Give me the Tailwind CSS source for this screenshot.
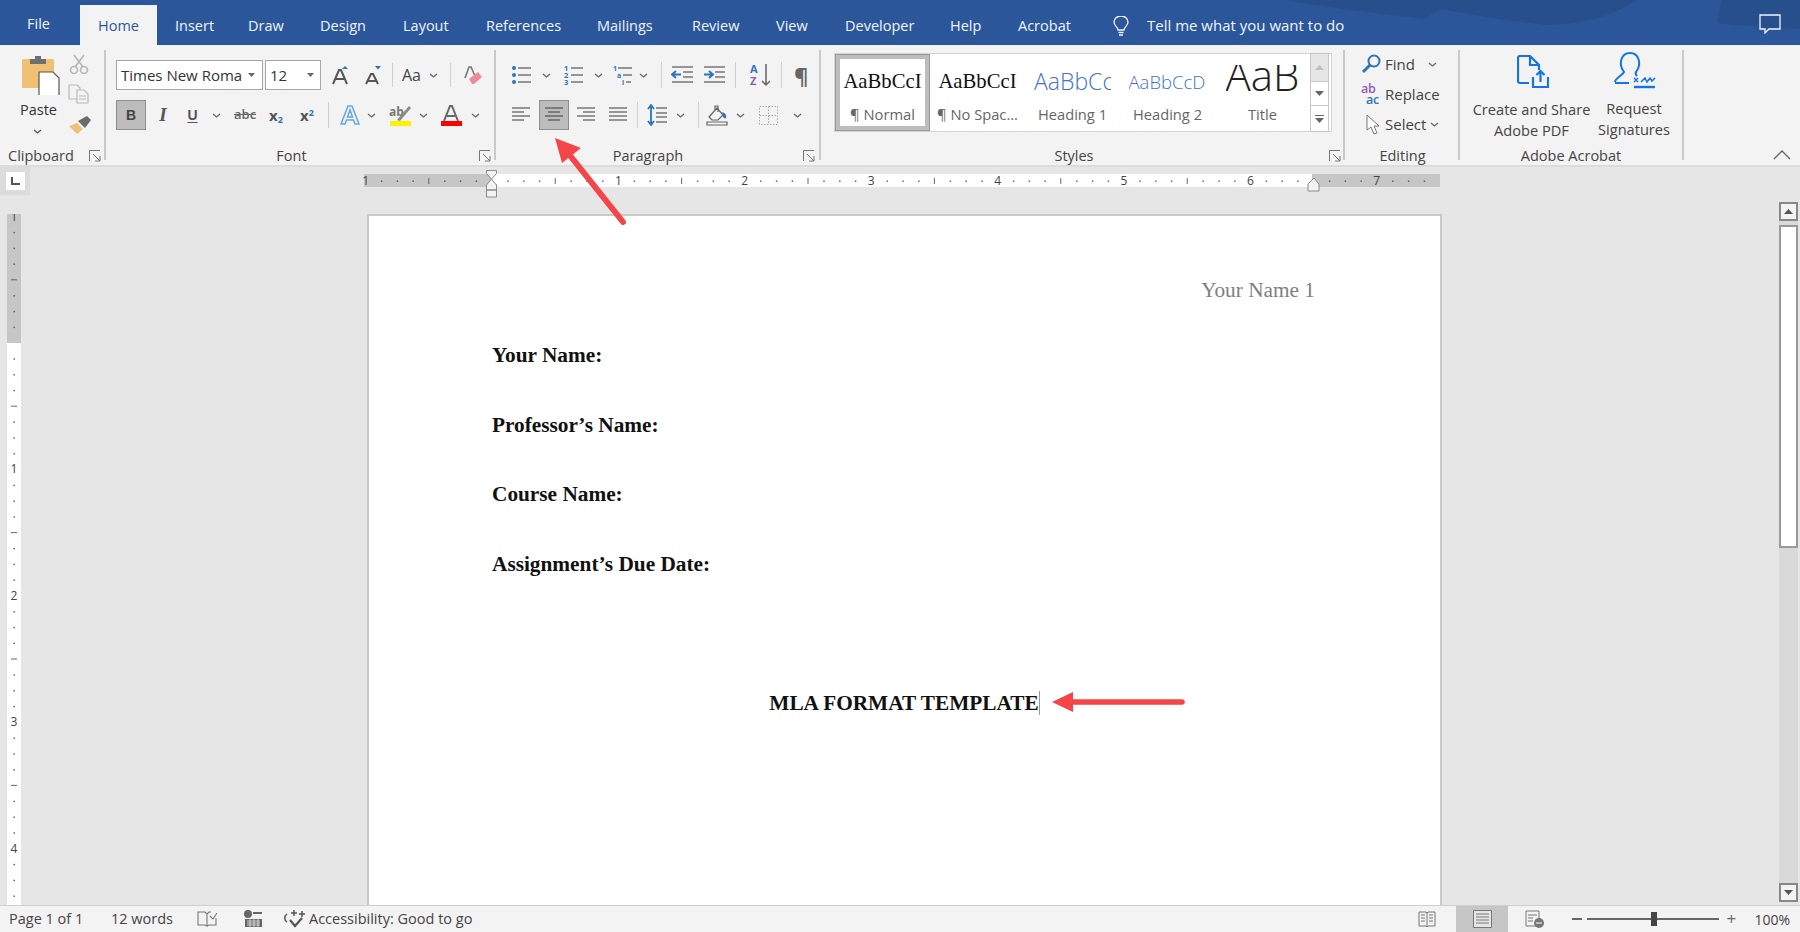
<!DOCTYPE html>
<html lang="en">
<head>
<meta charset="UTF-8">
<title>Word</title>
<script src="https://cdn.jsdelivr.net/npm/@tailwindcss/browser@4"></script>
</head>
<body class="w-[1800px] h-[932px] overflow-hidden flex flex-col bg-[#e6e6e6] font-['Open_Sans',sans-serif] text-[#444] relative">

<!-- TAB BAR -->
<header class="h-[45px] flex-none bg-[#2b579a] text-[#f0f4fa] text-[14.500px] flex items-end relative overflow-hidden">
  <svg class="absolute right-0 top-0" width="620" height="45" fill="#274f8c"><path d="M106 0Q146 8 246 19Q255 10 265 10Q320 20 365 25Q420 25 457 0ZM541 0L537 23Q570 27 620 29V0Z"/></svg>
  <nav class="flex items-end h-[40px] pl-[27px] relative">
    <span class="h-[40px] w-[53px] leading-[38px]">File</span>
    <span class="h-[40px] w-[77px] bg-[#f3f3f3] text-[#2b579a] text-center leading-[42px]">Home</span>
    <span class="h-[40px] w-[75px] pl-[18px] leading-[42px]">Insert</span>
    <span class="h-[40px] w-[88px] pl-[16px] leading-[42px]">Draw</span>
    <span class="h-[40px] w-[83px] leading-[42px]">Design</span>
    <span class="h-[40px] w-[83px] leading-[42px]">Layout</span>
    <span class="h-[40px] w-[111px] leading-[42px]">References</span>
    <span class="h-[40px] w-[95px] leading-[42px]">Mailings</span>
    <span class="h-[40px] w-[84px] leading-[42px]">Review</span>
    <span class="h-[40px] w-[69px] leading-[42px]">View</span>
    <span class="h-[40px] w-[105px] leading-[42px]">Developer</span>
    <span class="h-[40px] w-[68px] leading-[42px]">Help</span>
    <span class="h-[40px] w-[95px] leading-[42px]">Acrobat</span>
    <span class="h-[40px] flex items-start pt-[11px]">
      <svg width="16" height="21" viewBox="0 0 16 21" fill="none" stroke="#f0f4fa" stroke-width="1.3"><path d="M5 14c0-3-4-4-4-8a7 6 0 0 1 14 0c0 4-4 5-4 8zM5.5 16.500h5M6 19h4"/></svg>
      <span class="ml-[18px] leading-[18px] text-[15px]">Tell me what you want to do</span>
    </span>
  </nav>
  <svg class="absolute left-[1759px] top-[14px]" width="22" height="20" viewBox="0 0 22 20" fill="none" stroke="#f0f4fa" stroke-width="1.3"><path d="M1 1h20v14H10l-4 4v-4H1z"/></svg>
</header>

<!-- RIBBON -->
<section class="h-[122px] flex-none bg-[#f3f3f3] border-b-[2px] border-[#dcdcdc] flex pt-[5px] text-[14.500px]">

  <!-- Clipboard -->
  <div class="w-[106px] h-[110px] flex-none border-r-2 border-[#c9c9c9] flex flex-col">
    <div class="h-[99px] flex-none flex">
      <div class="w-[68px] pl-[20px] pt-[5px] flex flex-col items-start">
        <svg width="40" height="40" viewBox="0 0 40 40"><path d="M4 4h28a2 2 0 0 1 2 2v27H2V6a2 2 0 0 1 2-2z" fill="#f0c074" /><path d="M10 4h16v5H10z" fill="#6f6f6f"/><path d="M15 1h6v4h-6z" fill="#6f6f6f"/><path d="M19 17h14l6 6v19H19z" fill="#fff" stroke="#555" stroke-width="1.200"/></svg>
        <span class="mt-[6px] leading-[18px] text-[14.500px] text-[#333]">Paste</span>
        <svg class="ml-[13px] mt-[10px]" width="9" height="5" fill="none" stroke="#555" stroke-width="1.300"><path d="M1 1l3.500 3L8 1"/></svg>
      </div>
      <div class="flex flex-col pt-[4px] gap-[10px]">
        <svg width="22" height="20" viewBox="0 0 22 20" fill="none" stroke="#b6b6b6" stroke-width="1.600"><circle cx="6" cy="16" r="3.500"/><circle cx="16" cy="16" r="3.500"/><path d="M7 13L16 1M15 13L6 1"/></svg>
        <svg width="22" height="20" viewBox="0 0 22 20" fill="#f3f3f3" stroke="#b9b9b9" stroke-width="1.200"><path d="M1 1h8l3 3v11H1z"/><path d="M9 6h7l4 4v9H9z"/><path d="M11 12h7M11 15h7" stroke-width="1"/></svg>
        <svg width="24" height="20" viewBox="0 0 24 20"><path d="M1 12l8-3 6 6-6 5z" fill="#edc07b"/><path d="M10 7l7 7 6-8-4-4z" fill="#6b6b6b"/></svg>
      </div>
    </div>
    <div class="flex flex-none items-center h-[14px]">
      <span class="ml-[8px] w-[81px] leading-[14px]">Clipboard</span>
      <svg width="12" height="12" viewBox="0 0 12 12" fill="none" stroke="#777"><path d="M.5 11V.5H11M4 4l7 7M11 6v5H6"/></svg>
    </div>
  </div>

  <!-- Font -->
  <div class="w-[390px] h-[110px] flex-none border-r-2 border-[#c9c9c9] flex flex-col pl-[10px]">
    <div class="h-[99px] flex-none flex flex-col pt-[10px]">
      <div class="flex items-center h-[30px]">
        <div class="w-[147px] h-[30px] bg-white border border-[#a6a6a6] flex items-center justify-between pl-[4px] pr-[7px] text-[15px] text-[#333]">Times New Roma<svg width="7" height="4"><path d="M0 0h7L3.500 4z" fill="#666"/></svg></div>
        <div class="w-[56px] h-[30px] ml-[2px] bg-white border border-[#a6a6a6] flex items-center justify-between pl-[4px] pr-[6px] text-[15px] text-[#333]">12<svg width="7" height="4"><path d="M0 0h7L3.500 4z" fill="#666"/></svg></div>
        <svg class="ml-[11px]" width="18" height="20" viewBox="0 0 18 20"><path d="M1 19L7 5h2l6 14M3.500 14h9" fill="none" stroke="#555" stroke-width="2"/><path d="M10 4l3-3 3 3z" fill="#2e75b6"/></svg>
        <svg class="ml-[15px]" width="18" height="20" viewBox="0 0 18 20"><path d="M1 19L6 9h2l5 10M3 16h8" fill="none" stroke="#555" stroke-width="2"/><path d="M10 1h6l-3 3.500z" fill="#2e75b6"/></svg>
        <span class="w-px h-[24px] bg-[#cfcfcf] ml-[9px]"></span>
        <span class="ml-[9px] text-[16px] w-[24px]">Aa</span>
        <svg class="ml-[3px]" width="9" height="5" fill="none" stroke="#666" stroke-width="1.300"><path d="M1 1l3.500 3L8 1"/></svg>
        <span class="w-px h-[24px] bg-[#cfcfcf] ml-[12px]"></span>
        <svg class="ml-[12px]" width="20" height="20" viewBox="0 0 20 20"><path d="M2 13L6 2h2l4 9" fill="none" stroke="#777" stroke-width="1.600"/><path d="M6 14l9-7 4 5-8 7H9z" fill="#ea8a9b"/></svg>
      </div>
      <div class="flex items-center h-[30px] mt-[10px]">
        <span class="w-[30px] h-[30px] bg-[#bcbcbc] border border-[#8f8f8f] flex items-center justify-center font-['Liberation_Sans'] font-bold text-[14px] text-[#444]">B</span>
        <span class="w-[36px] text-center font-['Liberation_Serif'] italic font-bold text-[19px] text-[#555] pr-[2px]">I</span>
        <span class="w-[22px] text-center font-['Liberation_Sans'] font-bold text-[14px] text-[#555] underline underline-offset-2 -ml-[3px] pl-[5px]">U</span>
        <svg class="ml-[11px]" width="9" height="5" fill="none" stroke="#666" stroke-width="1.300"><path d="M1 1l3.500 3L8 1"/></svg>
        <span class="ml-[13px] w-[24px] text-[13px] font-semibold text-[#666] line-through">abc</span>
        <span class="ml-[11px] w-[20px] text-[15px] font-bold text-[#555]">x<sub class="text-[9px] text-[#2e75b6]">2</sub></span>
        <span class="ml-[11px] w-[20px] text-[15px] font-bold text-[#555]">x<sup class="text-[9px] text-[#2e75b6]">2</sup></span>
        <span class="w-px h-[26px] bg-[#cfcfcf] ml-[8px]"></span>
        <svg class="ml-[11px]" width="20" height="20" viewBox="0 0 20 20"><path d="M1 19L8 1h4l7 18h-4l-1.500-4h-7L5 19zM7.500 12h5L10 5z" fill="#eaf2fa" stroke="#6ea6da" stroke-width="1.500"/></svg>
        <svg class="ml-[7px]" width="9" height="5" fill="none" stroke="#666" stroke-width="1.300"><path d="M1 1l3.500 3L8 1"/></svg>
        <span class="ml-[13px] w-[22px] h-[22px] flex flex-col items-center justify-end">
          <svg width="22" height="16" viewBox="0 0 22 16"><text x="0" y="11" font-size="12" font-weight="700" font-family="Open Sans" fill="#777">ab</text><path d="M8 15L20 1l2 2L11 16z" fill="#8a8a8a"/></svg>
          <span class="w-[21px] h-[5px] bg-[#fff200] flex-none"></span>
        </span>
        <svg class="ml-[8px]" width="9" height="5" fill="none" stroke="#666" stroke-width="1.300"><path d="M1 1l3.500 3L8 1"/></svg>
        <span class="ml-[12px] w-[22px] h-[22px] flex flex-col items-center justify-end">
          <svg width="18" height="16" viewBox="0 0 18 16"><path d="M2 16L8 1h2l6 15M5 11h8" fill="none" stroke="#666" stroke-width="2"/></svg>
          <span class="w-[21px] h-[5px] bg-[#f00] flex-none"></span>
        </span>
        <svg class="ml-[9px]" width="9" height="5" fill="none" stroke="#666" stroke-width="1.300"><path d="M1 1l3.500 3L8 1"/></svg>
      </div>
    </div>
    <div class="flex flex-none items-center h-[14px]">
      <span class="flex-1 text-center leading-[14px] -ml-[12px]">Font</span>
      <svg class="mr-[3px]" width="12" height="12" viewBox="0 0 12 12" fill="none" stroke="#777"><path d="M.5 11V.5H11M4 4l7 7M11 6v5H6"/></svg>
    </div>
  </div>

  <!-- Paragraph -->
  <div class="w-[325px] h-[110px] flex-none border-r-2 border-[#c9c9c9] flex flex-col pl-[15px]">
    <div class="h-[99px] flex-none flex flex-col pt-[10px]">
      <div class="flex items-center h-[30px]">
        <svg width="20" height="20" viewBox="0 0 20 20"><path d="M7 3h13M7 10h13M7 17h13" stroke="#777" stroke-width="1.500"/><circle cx="3" cy="3" r="2" fill="#2e75b6"/><circle cx="3" cy="10" r="2" fill="#2e75b6"/><circle cx="3" cy="17" r="2" fill="#2e75b6"/></svg>
        <svg class="ml-[11px]" width="9" height="5" fill="none" stroke="#666" stroke-width="1.300"><path d="M1 1l3.500 3L8 1"/></svg>
        <svg class="ml-[12px]" width="20" height="20" viewBox="0 0 20 20" font-family="Open Sans" font-size="7.500" font-weight="700" fill="#2e75b6"><path d="M8 3h12M8 10h12M8 17h12" stroke="#777" stroke-width="1.500"/><text x="1" y="6">1</text><text x="1" y="13">2</text><text x="1" y="20">3</text></svg>
        <svg class="ml-[11px]" width="9" height="5" fill="none" stroke="#666" stroke-width="1.300"><path d="M1 1l3.500 3L8 1"/></svg>
        <svg class="ml-[9px]" width="22" height="20" viewBox="0 0 22 20" font-family="Open Sans" font-size="7" font-weight="700" fill="#2e75b6"><path d="M6 3h14M11 10h9M14 17h5" stroke="#777" stroke-width="1.500"/><text x="1" y="6">1</text><text x="5" y="13">a</text><text x="10" y="20">i</text></svg>
        <svg class="ml-[5px]" width="9" height="5" fill="none" stroke="#666" stroke-width="1.300"><path d="M1 1l3.500 3L8 1"/></svg>
        <span class="w-px h-[26px] bg-[#cfcfcf] ml-[13px]"></span>
        <svg class="ml-[9px]" width="22" height="20" viewBox="0 0 22 20"><path d="M1 2h21M12 7h10M12 12h10M1 17h21" stroke="#777" stroke-width="1.500"/><path d="M1 9.500h9M5 6L1 9.500 5 13" fill="none" stroke="#2e75b6" stroke-width="2"/></svg>
        <svg class="ml-[10px]" width="22" height="20" viewBox="0 0 22 20"><path d="M1 2h21M12 7h10M12 12h10M1 17h21" stroke="#777" stroke-width="1.500"/><path d="M1 9.500h9M6 6l4 3.500L6 13" fill="none" stroke="#2e75b6" stroke-width="2"/></svg>
        <span class="w-px h-[26px] bg-[#cfcfcf] ml-[10px]"></span>
        <svg class="ml-[14px]" width="20" height="24" viewBox="0 0 20 24"><path d="M16 1v21M12 18l4 4 4-4" fill="none" stroke="#666" stroke-width="1.500"/><text x="0" y="10" font-size="11" font-weight="700" fill="#2e75b6" font-family="Open Sans">A</text><text x="0" y="22" font-size="11" font-weight="700" fill="#8e5cb5" font-family="Open Sans">Z</text></svg>
        <span class="w-px h-[26px] bg-[#cfcfcf] ml-[11px]"></span>
        <span class="ml-[12px] text-[22px] font-bold text-[#666] leading-[20px]">¶</span>
      </div>
      <div class="flex items-center h-[30px] mt-[10px]">
        <svg width="20" height="18" viewBox="0 0 20 18" stroke="#777" stroke-width="1.400"><path d="M1 2h18M1 6h12M1 10h18M1 14h12"/></svg>
        <span class="ml-[8px] w-[30px] h-[30px] bg-[#bcbcbc] border border-[#8f8f8f] flex items-center justify-center"><svg width="20" height="18" viewBox="0 0 20 18" stroke="#666" stroke-width="1.400"><path d="M1 2h18M4 6h12M1 10h18M4 14h12"/></svg></span>
        <svg class="ml-[7px]" width="20" height="18" viewBox="0 0 20 18" stroke="#777" stroke-width="1.400"><path d="M1 2h18M7 6h12M1 10h18M7 14h12"/></svg>
        <svg class="ml-[12px]" width="20" height="18" viewBox="0 0 20 18" stroke="#777" stroke-width="1.400"><path d="M1 2h18M1 6h18M1 10h18M1 14h18"/></svg>
        <span class="w-px h-[26px] bg-[#cfcfcf] ml-[9px]"></span>
        <svg class="ml-[9px]" width="20" height="22" viewBox="0 0 20 22" fill="none"><path d="M9 4h11M9 9h11M9 13h11M9 18h11" stroke="#777" stroke-width="1.500"/><path d="M4 1v20M1 5l3-4 3 4M1 17l3 4 3-4" stroke="#2e75b6" stroke-width="1.800"/></svg>
        <svg class="ml-[9px]" width="9" height="5" fill="none" stroke="#666" stroke-width="1.300"><path d="M1 1l3.500 3L8 1"/></svg>
        <span class="w-px h-[26px] bg-[#cfcfcf] ml-[13px]"></span>
        <svg class="ml-[7px]" width="22" height="22" viewBox="0 0 22 22" fill="none"><path d="M1 21h20v-3H1zM3 13l8-9 6 7-5 5H6z" stroke="#666" stroke-width="1.200"/><path d="M9 6V2h3v6" stroke="#666" stroke-width="1.200"/><path d="M16 8c3 1 5 3 4 6-1 1-3 0-3-2z" fill="#2e75b6"/></svg>
        <svg class="ml-[8px]" width="9" height="5" fill="none" stroke="#666" stroke-width="1.300"><path d="M1 1l3.500 3L8 1"/></svg>
        <svg class="ml-[14px]" width="19" height="19" viewBox="0 0 19 19" fill="none" stroke="#aaa" stroke-dasharray="1.500 1.500"><path d="M.5.500h18v18H.5zM9.500.5v18M.5 9.500h18"/></svg>
        <svg class="ml-[15px]" width="9" height="5" fill="none" stroke="#666" stroke-width="1.300"><path d="M1 1l3.500 3L8 1"/></svg>
      </div>
    </div>
    <div class="flex flex-none items-center h-[14px]">
      <span class="flex-1 text-center leading-[14px] pr-[18px]">Paragraph</span>
      <svg class="mr-[4px]" width="12" height="12" viewBox="0 0 12 12" fill="none" stroke="#777"><path d="M.5 11V.5H11M4 4l7 7M11 6v5H6"/></svg>
    </div>
  </div>

  <!-- Styles -->
  <div class="w-[524px] h-[110px] flex-none border-r-2 border-[#c9c9c9] flex flex-col pl-[13px]">
    <div class="h-[99px] flex-none pt-[3px]">
      <div class="w-[498px] h-[79px] flex border border-[#d4d4d4] bg-white text-[14.700px]">
        <div class="w-[95px] h-[77px] flex-none border-[5px] border-[#bdbdbd] outline outline-[1px] -outline-offset-[1px] outline-[#999] flex flex-col items-center overflow-hidden">
          <span class="font-['Liberation_Serif'] text-[20.700px] leading-[25px] mt-[10px] text-[#111] whitespace-nowrap">AaBbCcI</span>
          <span class="mt-[11px] leading-[18px] text-[#666]">¶ Normal</span>
        </div>
        <div class="w-[95px] flex-none flex flex-col items-center overflow-hidden">
          <span class="font-['Liberation_Serif'] text-[20.700px] leading-[25px] mt-[15px] text-[#111] whitespace-nowrap">AaBbCcI</span>
          <span class="mt-[11px] leading-[18px] text-[#666] whitespace-nowrap">¶ No Spac...</span>
        </div>
        <div class="w-[95px] flex-none flex flex-col items-center">
          <span class="w-[77px] overflow-hidden text-[23px] font-light leading-[25px] mt-[15px] text-[#4472c4] whitespace-nowrap">AaBbCc</span>
          <span class="mt-[11px] leading-[18px] text-[#666]">Heading 1</span>
        </div>
        <div class="w-[95px] flex-none flex flex-col items-center">
          <span class="w-[78px] overflow-hidden text-[18.500px] font-light leading-[25px] mt-[15px] text-[#4472c4] whitespace-nowrap">AaBbCcD</span>
          <span class="mt-[11px] leading-[18px] text-[#666]">Heading 2</span>
        </div>
        <div class="w-[95px] flex-none flex flex-col items-center">
          <span class="h-[30px] overflow-hidden text-[42px] font-light leading-[19px] mt-[11px] text-[#222] whitespace-nowrap">AaB</span>
          <span class="mt-[10px] leading-[18px] text-[#666]">Title</span>
        </div>
        <div class="w-[19px] flex-none -my-px flex flex-col border border-[#c6c6c6] bg-white">
          <span class="h-[28px] flex-none bg-[#e6e6e6] border-b border-[#c6c6c6] flex items-center justify-center"><svg width="9" height="5"><path d="M0 5h9L4.500 0z" fill="#c0c0c0"/></svg></span>
          <span class="h-[24px] flex-none border-b border-[#c6c6c6] flex items-center justify-center"><svg width="9" height="5"><path d="M0 0h9L4.500 5z" fill="#666"/></svg></span>
          <span class="flex-1 flex items-center justify-center"><svg width="9" height="8"><path d="M0 0h9v1H0zM0 3h9L4.500 8z" fill="#666"/></svg></span>
        </div>
      </div>
    </div>
    <div class="flex flex-none items-center h-[14px]">
      <span class="flex-1 text-center leading-[14px] pr-[15px]">Styles</span>
      <svg class="mr-[2px]" width="12" height="12" viewBox="0 0 12 12" fill="none" stroke="#777"><path d="M.5 11V.5H11M4 4l7 7M11 6v5H6"/></svg>
    </div>
  </div>

  <!-- Editing -->
  <div class="w-[115px] h-[110px] flex-none border-r-2 border-[#c9c9c9] flex flex-col pl-[16px]">
    <div class="h-[99px] flex-none flex flex-col text-[15px] text-[#444]">
      <div class="flex items-center h-[30px] -mt-px">
        <svg width="20" height="20" viewBox="0 0 20 20" fill="none" stroke="#2e75b6"><circle cx="13" cy="7" r="5.500" stroke-width="2"/><path d="M9 11l-7 7" stroke-width="3"/></svg>
        <span class="ml-[4px] w-[43px]">Find</span>
        <svg width="9" height="5" fill="none" stroke="#666" stroke-width="1.300"><path d="M1 1l3.500 3L8 1"/></svg>
      </div>
      <div class="flex items-center h-[30px]">
        <span class="w-[24px] text-[12.500px] font-semibold leading-[11px] tracking-tight"><span class="text-[#8e5cb5]">ab</span><br><span class="text-[#2e75b6] pl-[5px]">ac</span></span>
        <span>Replace</span>
      </div>
      <div class="flex items-center h-[30px]">
        <svg class="ml-[5px]" width="14" height="21" viewBox="0 0 14 21" fill="#fff" stroke="#777"><path d="M1 1v15l4-3 3 7 3-1-3-7h5z"/></svg>
        <span class="ml-[5px] w-[47px]">Select</span>
        <svg class="-ml-[2px]" width="9" height="5" fill="none" stroke="#666" stroke-width="1.300"><path d="M1 1l3.500 3L8 1"/></svg>
      </div>
    </div>
    <div class="h-[14px] flex-none leading-[14px] text-center pr-[14px]">Editing</div>
  </div>

  <!-- Adobe Acrobat -->
  <div class="w-[224px] h-[110px] flex-none border-r-2 border-[#c9c9c9] flex flex-col">
    <div class="h-[99px] flex-none flex text-[14.600px] leading-[21px] text-center text-[#444]">
      <div class="w-[134px] pl-[9px] flex flex-col items-center pt-[5px]">
        <svg class="ml-[3px]" width="32" height="34" viewBox="0 0 32 34" fill="none" stroke="#1473e6" stroke-width="2.200"><path d="M12 28H3a2 2 0 0 1-2-2V3a2 2 0 0 1 2-2h10l9 9v5M13 1v9h9"/><path d="M16 22v10h15V22M23.500 27V16M19.500 20l4-4 4 4"/></svg>
        <span class="mt-[10px] whitespace-nowrap">Create and Share<br>Adobe PDF</span>
      </div>
      <div class="w-[80px] flex flex-col items-center pt-[2px]">
        <svg class="ml-[2px]" width="42" height="37" viewBox="0 0 42 37" fill="none" stroke="#1473e6" stroke-width="2"><path d="M1 30c0-4 8-7 9-10-6-8-3-19 6-19s12 11 6 19c-1 2 0 3 1 4M1 31h14"/><path d="M20 35h21" stroke-width="2.400"/><path d="M20 26l4 4M24 26l-4 4M27 30l4-4 2 4 3-4 2 3 3-3" stroke-width="1.500"/></svg>
        <span class="mt-[9px]">Request<br>Signatures</span>
      </div>
    </div>
    <div class="h-[14px] flex-none leading-[14px] text-center">Adobe Acrobat</div>
  </div>

  <!-- collapse -->
  <div class="flex-1 flex justify-end items-end pr-[9px] pb-[2px]">
    <svg class="mb-[3px]" width="18" height="10" fill="none" stroke="#666" stroke-width="1.300"><path d="M1 9l8-8 8 8"/></svg>
  </div>
</section>

<!-- WORKSPACE -->
<main class="flex-1 min-h-0 relative flex">
  <!-- vertical ruler column -->
  <div class="w-[367px] flex-none flex flex-col">
    <div class="w-[30px] h-[28px] flex-none bg-[#dcdcdc] flex items-center justify-center">
      <span class="w-[19px] h-[18px] bg-white flex items-center justify-center">
        <svg width="9" height="8" fill="none" stroke="#555" stroke-width="2"><path d="M1 0v7h8"/></svg>
      </span>
    </div>
    <svg id="vruler" class="ml-[7px] mt-[19px] flex-none" width="14" height="691"></svg>
  </div>

  <!-- ruler + page -->
  <div class="w-[1075px] flex-none flex flex-col">
    <svg id="hruler" class="mt-[7px] flex-none overflow-visible" width="1073" height="13"></svg>
    <article class="mt-[27px] flex-1 bg-white border-t-2 border-x-2 border-[#c9c9c9] font-['Liberation_Serif',serif] font-bold text-[21.300px] text-[#111] pl-[123px]">
      <div class="h-[105px] pr-[125px] pt-[62px] flex justify-end font-normal text-[#7f7f7f] leading-[24px]">Your Name 1</div>
      <p class="h-[69.600px] leading-[69.600px]">Your Name:</p>
      <p class="h-[69.600px] leading-[69.600px]">Professor’s Name:</p>
      <p class="h-[69.600px] leading-[69.600px]">Course Name:</p>
      <p class="h-[69.600px] leading-[69.600px]">Assignment’s Due Date:</p>
      <p class="h-[69.600px]"></p>
      <p class="h-[69.600px] leading-[69.600px] -ml-[123px] text-center"><span class="border-r border-[#999]">MLA FORMAT TEMPLATE</span></p>
    </article>
  </div>

  <div class="flex-1"></div>

  <!-- scrollbar -->
  <div class="w-[19px] mr-[2px] mt-[35px] mb-[3px] flex flex-col bg-[#d9d9d9]">
    <span class="h-[19px] flex-none bg-[#f3f3f3] border-2 border-[#888] flex items-center justify-center"><svg width="9" height="5"><path d="M0 5h9L4.500 0z" fill="#555"/></svg></span>
    <span class="mt-[4px] h-[323px] flex-none bg-white border-2 border-[#999]"></span>
    <span class="flex-1"></span>
    <span class="h-[19px] flex-none bg-[#f3f3f3] border-2 border-[#888] flex items-center justify-center"><svg width="9" height="5"><path d="M0 0h9L4.500 5z" fill="#555"/></svg></span>
  </div>
</main>

<!-- STATUS BAR -->
<footer class="h-[27px] flex-none bg-[#f3f3f3] border-t border-[#cfcfcf] flex items-center text-[14.500px] text-[#444] pl-[9px]">
  <span class="w-[102px]">Page 1 of 1</span>
  <span class="w-[86px]">12 words</span>
  <svg width="20" height="18" viewBox="0 0 20 18" fill="none" stroke="#777"><path d="M1 2h7l2 2v12l-2-1H1zM10 4l2-2h2M10 16l2-1h7V8M13 6l3 3 4-6" stroke-width="1.100"/></svg>
  <svg class="ml-[26px]" width="20" height="18" viewBox="0 0 20 18"><circle cx="5" cy="4" r="4" fill="#666"/><path d="M10 2h9v2h-9zM2 9h17v8H2z" fill="#666"/><path d="M4 11h13M4 13h13M4 15h13M7 9v8M11 9v8M15 9v8" stroke="#f3f3f3" stroke-width=".7"/></svg>
  <svg class="ml-[20px]" width="24" height="20" viewBox="0 0 24 20" fill="none" stroke="#555" stroke-width="1.500"><path d="M4 5C1 7 1 11 4 13M11 1v6M8 4h6M16 5h6M19 2v6"/><path d="M7 11l5 6 7-8" stroke-width="2.200"/></svg>
  <span class="ml-[2px]">Accessibility: Good to go</span>
  <span class="flex-1"></span>
  <svg width="18" height="17" viewBox="0 0 18 17" fill="none" stroke="#777"><path d="M1 1h7l1 1 1-1h7v14h-7l-1 1-1-1H1zM9 2v14M3 4h4M3 7h4M3 10h4M11 4h4M11 7h4M11 10h4"/></svg>
  <span class="ml-[20px] w-[52px] h-[26px] bg-[#c6c6c6] flex items-center justify-center"><svg width="19" height="18" viewBox="0 0 19 18" fill="#e6e6e6" stroke="#777"><path d="M.5.500h18v17H.5zM3 4h13M3 7h13M3 10h13M3 13h13"/></svg></span>
  <svg class="ml-[17px]" width="20" height="19" viewBox="0 0 20 19" fill="none" stroke="#777"><path d="M1 1h13v15H1zM3 5h9M3 8h5M3 11h5"/><circle cx="14" cy="13" r="5" fill="#777" stroke="none"/><path d="M11 13h6" stroke="#fff"/></svg>
  <span class="w-[10px] h-[2px] bg-[#666] ml-[27px]"></span>
  <span class="ml-[5px] w-[132px] h-[2px] bg-[#666] flex items-center pl-[64px]"><span class="w-[6px] h-[14px] bg-[#444]"></span></span>
  <span class="ml-[7px] text-[17px] leading-[20px] w-[10px] text-[#666]">+</span>
  <span class="ml-[18px] mr-[10px] text-[14px]">100%</span>
</footer>

<!-- annotation arrows -->
<svg class="absolute left-0 top-0 pointer-events-none" width="1800" height="932" fill="#f44548">
  <path d="M623 222L568 153" stroke="#f44548" stroke-width="6" stroke-linecap="round"/>
  <path d="M555 138l26 10-19 15z"/>
  <path d="M1182 702H1070" stroke="#f44548" stroke-width="5.500" stroke-linecap="round"/>
  <path d="M1052 702l21-10v20z"/>
</svg>

<script>
// ruler ticks, 1/8 inch apart
const INCH = 126.4
const NS = 'http://www.w3.org/2000/svg'
function add(svg, tag, attrs, text) {
  const el = document.createElementNS(NS, tag)
  for (const k in attrs) el.setAttribute(k, attrs[k])
  if (text) el.textContent = text
  svg.appendChild(el)
}
function tick(svg, i, at, across, horizontal) {
  const n = i % 8
  const label = Math.abs(i / 8)
  if (n === 0 && i !== 0) {
    const p = horizontal ? { x: at, y: across + 4 } : { x: across, y: at + 4 }
    add(svg, 'text', { ...p, 'text-anchor': 'middle', 'font-size': 12, 'font-family': 'Open Sans', fill: '#444' }, String(label))
  } else if (i % 4 === 0 && i !== 0) {
    if (horizontal) add(svg, 'rect', { x: at - .5, y: across - 3, width: 1, height: 6, fill: '#666' })
    else add(svg, 'rect', { x: across - 3, y: at - .5, width: 6, height: 1, fill: '#666' })
  } else if (i !== 0) {
    const p = horizontal ? { x: at - .5, y: across - .5 } : { x: across - .5, y: at - .5 }
    add(svg, 'rect', { ...p, width: 1.400, height: 1.400, fill: '#555' })
  }
}
const h = document.getElementById('hruler')
add(h, 'rect', { x: -3, y: 0, width: 1076, height: 13, fill: '#c6c6c6' })
add(h, 'rect', { x: 125, y: 0, width: 820, height: 13, fill: '#fff' })
for (let i = -8; i <= 59; i++) tick(h, i, 125 + i * INCH / 8, 7, true)
const v = document.getElementById('vruler')
add(v, 'rect', { x: 0, y: 0, width: 14, height: 691, fill: '#fff' })
add(v, 'rect', { x: 0, y: 0, width: 14, height: 129, fill: '#c6c6c6' })
for (let i = -8; i <= 44; i++) tick(v, i, 129 + i * INCH / 8, 7, false)
</script>

<!-- indent markers -->
<svg class="absolute left-[485px] top-[169px] pointer-events-none" width="14" height="30" fill="#f3f3f3" stroke="#8a8a8a"><path d="M1.500 1.500h10v3L6.500 10l-5-5.500zM6.500 10l5 6v5h-10v-5zM1.500 21h10v7h-10z"/></svg>
<svg class="absolute left-[1307px] top-[177px] pointer-events-none" width="14" height="16" fill="#f3f3f3" stroke="#8a8a8a"><path d="M7 1l5 6v7H1V7z"/></svg>
</body>
</html>
